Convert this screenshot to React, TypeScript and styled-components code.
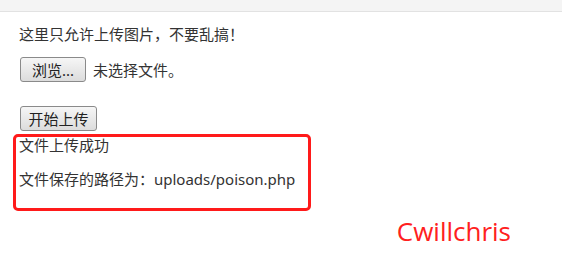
import styled, { createGlobalStyle } from "styled-components";

const GlobalStyle = createGlobalStyle`
  html, body {
    margin: 0;
    padding: 0;
    background: #fff;
  }
  body {
    font-family: "Noto Sans", "Noto Sans CJK SC", sans-serif;
    font-size: 15px;
    color: #333;
  }
`;

const App = () => (
  <>
    <GlobalStyle />
    <TopBar />
    <Page>
      <Notice>这里只允许上传图片，不要乱搞！</Notice>
      <FileRow>
        <Button type="button" $width={66}>浏览...</Button>
        <FileName>未选择文件。</FileName>
      </FileRow>
      <Button type="button" $width={77}>开始上传</Button>
      <ResultBox>
        <ResultLine>文件上传成功</ResultLine>
        <ResultLine>文件保存的路径为：uploads/poison.php</ResultLine>
      </ResultBox>
      <Signature>Cwillchris</Signature>
    </Page>
  </>
);

export default App;

const TopBar = styled.div`
  height: 11px;
  background: #f4f4f4;
  border-bottom: 1px solid #e2e2e2;
`;

const Page = styled.div`
  padding: 12px 0 0 19px;
  display: flex;
  flex-direction: column;
  align-items: flex-start;
`;

const Notice = styled.div`
  line-height: 20px;
  height: 20px;
`;

const FileRow = styled.div`
  display: flex;
  align-items: center;
  gap: 7px;
  margin-top: 13px;
  margin-bottom: 24px;
`;

const Button = styled.button<{ $width: number }>`
  font-family: "Noto Sans", "Noto Sans CJK SC", sans-serif;
  font-size: 15px;
  color: #222;
  width: ${(p) => p.$width}px;
  height: 25px;
  padding: 0;
  margin-left: 1px;
  border: 1px solid #8a8a8a;
  border-radius: 3px;
  background: linear-gradient(#f6f6f6, #dcdcdc);
  line-height: 20px;
`;

const FileName = styled.span`
  line-height: 20px;
`;

const ResultBox = styled.div`
  margin-left: -6px;
  margin-top: 3px;
  width: 289px;
  height: 71px;
  border: 3px solid #ff1a1a;
  border-radius: 5px;
  padding: 0 0 0 3px;
  box-sizing: content-box;
  display: flex;
  flex-direction: column;
  gap: 16px;
`;

const ResultLine = styled.div`
  line-height: 20px;
  margin-top: -2px;
`;

const Signature = styled.div`
  align-self: flex-end;
  margin-right: 51px;
  margin-top: 2px;
  font-size: 26px;
  color: #ff2020;
  font-family: "Open Sans", sans-serif;
`;
